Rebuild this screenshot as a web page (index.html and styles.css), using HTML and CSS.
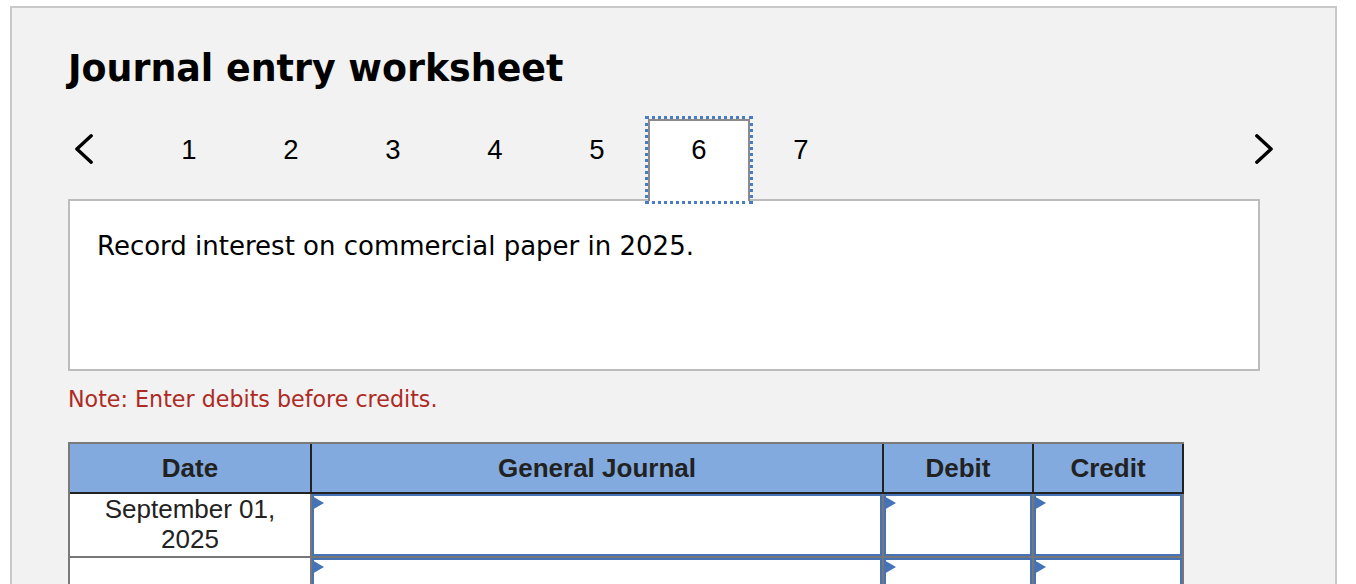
FILE: index.html
```html
<!DOCTYPE html>
<html lang="en">
<head>
<meta charset="utf-8">
<title>Journal entry worksheet</title>
<link rel="stylesheet" href="styles.css">
</head>
<body>
<div class="panel">
  <h1 class="title">Journal entry worksheet</h1>
  <nav class="steps">
    <div class="step-arrow prev">
      <svg width="18" height="30" viewBox="0 0 18 30"><polyline points="16.2,1.8 1.9,15 16.2,28.2" fill="none" stroke="#000" stroke-width="3.4" stroke-linecap="round" stroke-linejoin="round"/></svg>
    </div>
    <div class="step-list">
      <span class="step">1</span>
      <span class="step">2</span>
      <span class="step">3</span>
      <span class="step">4</span>
      <span class="step">5</span>
      <span class="step step-active">6</span>
      <span class="step">7</span>
    </div>
    <div class="step-arrow next">
      <svg width="18" height="30" viewBox="0 0 18 30"><polyline points="1.8,1.8 16.1,15 1.8,28.2" fill="none" stroke="#000" stroke-width="3.4" stroke-linecap="round" stroke-linejoin="round"/></svg>
    </div>
  </nav>
  <div class="prompt">Record interest on commercial paper in 2025.</div>
  <p class="note">Note: Enter debits before credits.</p>
  <div class="journal">
    <div class="jh">Date</div>
    <div class="jh">General Journal</div>
    <div class="jh">Debit</div>
    <div class="jh">Credit</div>

    <div class="jd jd-date">September 01,<br>2025</div>
    <div class="jd"><div class="field"></div></div>
    <div class="jd"><div class="field"></div></div>
    <div class="jd"><div class="field"></div></div>

    <div class="jd jd-date"></div>
    <div class="jd"><div class="field"></div></div>
    <div class="jd"><div class="field"></div></div>
    <div class="jd"><div class="field"></div></div>

    <div class="jd jd-date"></div>
    <div class="jd"><div class="field"></div></div>
    <div class="jd"><div class="field"></div></div>
    <div class="jd"><div class="field"></div></div>
  </div>
</div>
</body>
</html>
```

FILE: styles.css
```css
html, body {
  margin: 0;
  padding: 0;
  background: #ffffff;
}

.panel {
  margin: 6px 19px 0 10px;
  border: 2px solid #c8c8c8;
  background: #f2f2f2;
  padding: 0 0 60px 56px;
}

.title {
  margin: 39px 0 0;
  font-family: "DejaVu Sans", Verdana, sans-serif;
  font-weight: bold;
  font-size: 36.4px;
  line-height: 44px;
  color: #000;
}

.steps {
  display: flex;
  align-items: flex-start;
  width: 1205px;
  height: 80px;
  margin-top: 28px;
}

.step-arrow {
  height: 80px;
  padding-top: 15px;
  box-sizing: border-box;
}

.step-arrow svg {
  display: block;
}

.prev {
  width: 70px;
  padding-left: 7px;
}

.next {
  margin-left: auto;
}

.step-list {
  display: flex;
}

.step {
  display: block;
  width: 102px;
  height: 80px;
  box-sizing: border-box;
  border: 2px solid transparent;
  border-bottom: 0;
  padding-top: 15px;
  text-align: center;
  font-family: "Liberation Sans", Arial, sans-serif;
  font-size: 27.5px;
  line-height: 28px;
  color: #000;
}

.step-active {
  position: relative;
  z-index: 1;
  height: 82px;
  background: #ffffff;
  border-color: #8a8a8a;
}

.step-active::after {
  content: "";
  position: absolute;
  left: -5px;
  right: -5px;
  top: -5px;
  bottom: -3px;
  border: 3px dotted #4a7cc4;
  pointer-events: none;
}

.prompt {
  width: 1192px;
  height: 172px;
  box-sizing: border-box;
  border: 2px solid #bcbcbc;
  background: #ffffff;
  padding: 29px 0 0 27px;
  font-family: "DejaVu Sans", Verdana, sans-serif;
  font-size: 26px;
  line-height: 32px;
  color: #000;
}

.note {
  margin: 15px 0 0;
  font-family: "DejaVu Sans", Verdana, sans-serif;
  font-size: 22.2px;
  line-height: 26px;
  color: #ae2a24;
}

.journal {
  display: grid;
  grid-template-columns: 242px 572px 150px 150px;
  width: max-content;
  margin-top: 30px;
  border-top: 2px solid #7a7a7a;
  border-left: 2px solid #7a7a7a;
  font-family: "Liberation Sans", Arial, sans-serif;
  color: #222;
}

.jh {
  height: 50px;
  box-sizing: border-box;
  border-right: 2px solid #222;
  border-bottom: 2px solid #222;
  background: #82aade;
  text-align: center;
  font-weight: bold;
  font-size: 26px;
  line-height: 48px;
}

.jd {
  height: 64px;
  box-sizing: border-box;
  border-right: 2px solid #777;
  border-bottom: 2px solid #777;
  background: #ffffff;
}

.jd-date {
  text-align: center;
  font-size: 26px;
  line-height: 30px;
  padding-top: 0;
}

.field {
  position: relative;
  height: 100%;
  box-sizing: border-box;
  border: 2px solid #4673b6;
  background: #ffffff;
}

.field::before {
  content: "";
  position: absolute;
  left: -2px;
  top: 0;
  border-top: 7px solid transparent;
  border-bottom: 7px solid transparent;
  border-left: 12px solid #4673b6;
}
```
